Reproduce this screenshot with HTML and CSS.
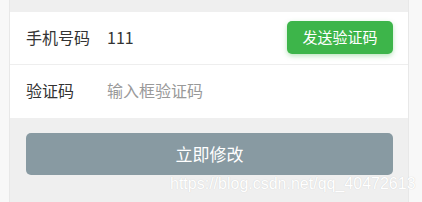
FILE: index.html
```html
<!DOCTYPE html>
<html>
<head>
    <meta charset="utf-8">
    <link rel="stylesheet" href="styles.css">
</head>
<body>
    <div class="page">
        <div class="panel">
            <div class="row">
                <span class="label">手机号码</span>
                <span class="value">111</span>
                <button class="send-btn">发送验证码</button>
            </div>
            <div class="row">
                <span class="label">验证码</span>
                <span class="placeholder">输入框验证码</span>
            </div>
            <button class="submit-btn">立即修改</button>
        </div>
    </div>
    <div class="watermark">https://blog.csdn.net/qq_40472613</div>
</body>
</html>
```

FILE: styles.css
```css
body {
    margin: 0;
    background-color: #f8f8f8;
    font-family: "Noto Sans CJK SC", "Liberation Sans", sans-serif;
    color: #333;
}
.page {
    width: 422px;
    height: 202px;
    padding-left: 9px;
    box-sizing: border-box;
}
.panel {
    width: 400px;
    height: 202px;
    box-sizing: border-box;
    padding-top: 12px;
    background-color: #efefef;
    border-left: 1px solid #e8e8e8;
    border-right: 1px solid #e8e8e8;
}
.row {
    display: flex;
    align-items: center;
    box-sizing: border-box;
    height: 52px;
    padding: 0 15px 3px 16px;
    background-color: #fff;
    font-size: 16px;
}
.row + .row {
    border-top: 1px solid #eee;
    height: 54px;
}
.label {
    width: 81px;
    color: #333;
}
.value {
    flex: 1;
    color: #333;
}
.placeholder {
    color: #999;
}
.send-btn {
    width: 106px;
    height: 33px;
    margin-top: 2px;
    padding: 0 0 2px;
    border: none;
    border-radius: 5px;
    background-color: #3db54a;
    color: #fff;
    font-family: inherit;
    font-size: 15px;
    box-shadow: 0 2px 5px rgba(60, 180, 70, 0.35);
}
.submit-btn {
    display: block;
    width: 367px;
    height: 42px;
    margin: 15px 0 0 16px;
    padding: 0 0 2px;
    border: none;
    border-radius: 5px;
    background-color: #889aa2;
    color: #fff;
    font-family: inherit;
    font-size: 17px;
}
.watermark {
    position: absolute;
    left: 170px;
    top: 175px;
    font-family: "Liberation Sans", sans-serif;
    font-size: 16px;
    color: #fff;
    text-shadow: 0 0 1px #c8c8c8;
}
```
